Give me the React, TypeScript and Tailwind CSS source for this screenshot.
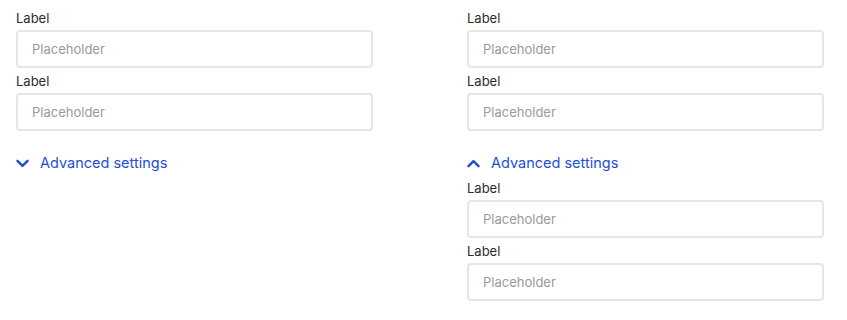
import { useState } from "react";

// Form sections with collapsible advanced settings

function Field({ label }: { label: string }) {
  return (
    <div className="flex flex-col">
      <label className="text-[13px] leading-4 text-[#2b2b2b] mb-1">{label}</label>
      <input
        placeholder="Placeholder"
        className="h-[38px] w-full rounded-[4px] border-2 border-[#e6e6e6] bg-white px-[14px] text-[13px] text-[#2b2b2b] placeholder:text-[#9a9a9a] outline-none"
      />
    </div>
  );
}

function Chevron({ open }: { open: boolean }) {
  return (
    <svg width="13" height="9" viewBox="0 0 13 9" fill="none" className="shrink-0">
      {open ? (
        <path d="M1.5 7.2 6.5 2.2l5 5" stroke="#1d4ed8" strokeWidth="2.4" strokeLinecap="round" strokeLinejoin="round" />
      ) : (
        <path d="M1.5 1.8 6.5 6.8l5-5" stroke="#1d4ed8" strokeWidth="2.4" strokeLinecap="round" strokeLinejoin="round" />
      )}
    </svg>
  );
}

function FormSection({ defaultOpen = false }: { defaultOpen?: boolean }) {
  const [open, setOpen] = useState(defaultOpen);

  return (
    <div className="flex flex-col">
      <div className="flex flex-col gap-[5px]">
        <Field label="Label" />
        <Field label="Label" />
      </div>

      <button
        type="button"
        onClick={() => setOpen(!open)}
        className="mt-[22px] flex h-5 items-center gap-[11px] text-[14.5px] text-[#1d4ed8]"
      >
        <Chevron open={open} />
        <span>Advanced settings</span>
      </button>

      {open && (
        <div className="mt-[7px] flex flex-col gap-[5px]">
          <Field label="Label" />
          <Field label="Label" />
        </div>
      )}
    </div>
  );
}

export default function App() {
  return (
    <div
      className="min-h-[320px] bg-white pl-4 pt-[10px]"
      style={{ fontFamily: "Inter, 'Noto Sans', sans-serif" }}
    >
      <div className="grid grid-cols-[357px_357px] items-start gap-x-[94px]">
        <FormSection />
        <FormSection defaultOpen />
      </div>
    </div>
  );
}
